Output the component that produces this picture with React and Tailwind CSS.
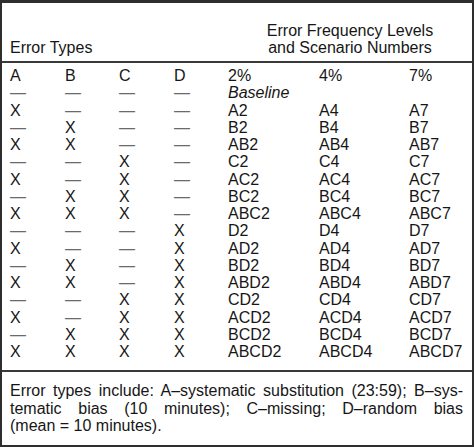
const LETTERS = ["A", "B", "C", "D"];

// scenarios 1..15 — bit i set means error type LETTERS[i] is active
const scenarios = Array.from({ length: 15 }, (_, n) => {
  const i = n + 1;
  const flags = LETTERS.map((_, b) => Boolean(i & (1 << b)));
  const name = LETTERS.filter((_, b) => flags[b]).join("");
  return { flags, name };
});

const Dash = () => <span className="text-[#6a6a6a]">—</span>;

export default function App() {
  return (
    <div className="w-[474px] h-[447px] bg-white text-[#161616] text-[16px] font-['Liberation_Sans',Arial,sans-serif]">
      <div className="border-x-2 border-t-[3px] border-b-2 border-[#2e2e2e]">
        {/* Header */}
        <div className="grid grid-cols-[55px_54px_55px_54px_1fr] pl-2 pt-[19px] pb-[5px] leading-[17px] border-b-2 border-[#3a3a3a]">
          <div className="col-span-4 self-end">Error Types</div>
          <div className="text-center">
            <div>Error Frequency Levels</div>
            <div>and Scenario Numbers</div>
          </div>
        </div>

        {/* Body */}
        <div className="grid grid-cols-[55px_54px_55px_54px_91px_90px_1fr] pl-2 pt-1 pb-[10px] leading-[17.25px] border-b-2 border-[#3a3a3a]">
          {LETTERS.map((l) => (
            <div key={l}>{l}</div>
          ))}
          <div>2%</div>
          <div>4%</div>
          <div>7%</div>

          {LETTERS.map((l) => (
            <div key={"b" + l}>
              <Dash />
            </div>
          ))}
          <div className="col-span-3 italic">Baseline</div>

          {scenarios.map((s) => (
            <div key={s.name} className="contents">
              {s.flags.map((f, b) => (
                <div key={b}>{f ? "X" : <Dash />}</div>
              ))}
              <div>{s.name}2</div>
              <div>{s.name}4</div>
              <div>{s.name}7</div>
            </div>
          ))}
        </div>

        {/* Footnote */}
        <div className="pl-2 pr-[9px] pt-[10px] pb-[10px] leading-[17.5px]">
          <div className="text-justify [text-align-last:justify]">
            Error types include: A–systematic substitution (23:59); B–sys-
          </div>
          <div className="text-justify [text-align-last:justify]">
            tematic bias (10 minutes); C–missing; D–random bias
          </div>
          <div>(mean = 10 minutes).</div>
        </div>
      </div>
    </div>
  );
}
